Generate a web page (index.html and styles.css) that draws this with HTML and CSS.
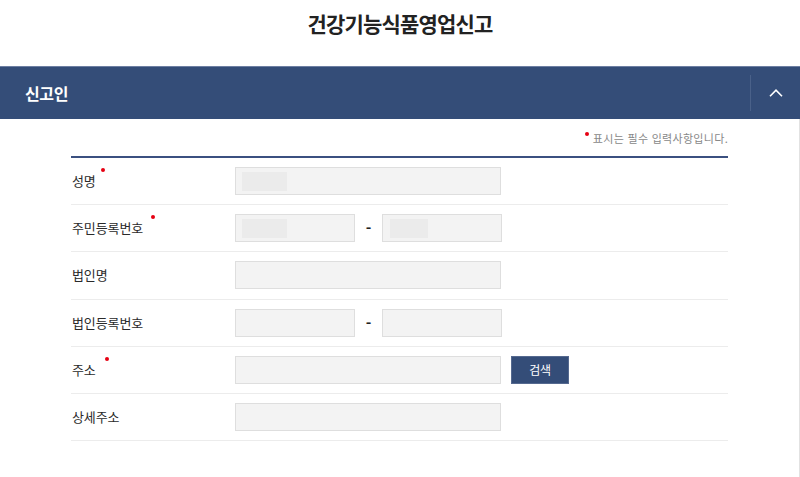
FILE: index.html
```html
<!DOCTYPE html>
<html lang="ko">
<head>
<meta charset="utf-8">
<title>건강기능식품영업신고</title>
<link rel="stylesheet" href="styles.css">
</head>
<body>
<h1 class="page-title">건강기능식품영업신고</h1>
<section class="panel">
  <div class="panel-head">
    <h2 class="panel-title">신고인</h2>
    <button class="toggle" type="button" aria-label="접기">
      <svg width="14" height="8" viewBox="0 0 14 8"><path d="M1 7.2 L7 1.2 L13 7.2" fill="none" stroke="#fff" stroke-width="1.6"/></svg>
    </button>
  </div>
  <div class="panel-body">
    <p class="note"><span class="req"></span>표시는 필수 입력사항입니다.</p>
    <div class="form">
      <div class="row">
        <div class="label">성명<span class="req req-label"></span></div>
        <div class="field"><div class="input wide"><span class="mask m1"></span></div></div>
      </div>
      <div class="row">
        <div class="label">주민등록번호<span class="req req-label"></span></div>
        <div class="field">
          <div class="input half"><span class="mask m1"></span></div>
          <span class="dash">-</span>
          <div class="input half"><span class="mask m2"></span></div>
        </div>
      </div>
      <div class="row">
        <div class="label">법인명</div>
        <div class="field"><div class="input wide"></div></div>
      </div>
      <div class="row">
        <div class="label">법인등록번호</div>
        <div class="field">
          <div class="input half"></div>
          <span class="dash">-</span>
          <div class="input half"></div>
        </div>
      </div>
      <div class="row">
        <div class="label">주소<span class="req req-label far"></span></div>
        <div class="field">
          <div class="input wide"></div>
          <button class="btn" type="button">검색</button>
        </div>
      </div>
      <div class="row">
        <div class="label">상세주소</div>
        <div class="field"><div class="input wide"></div></div>
      </div>
    </div>
  </div>
</section>
</body>
</html>
```

FILE: styles.css
```css
* { box-sizing: border-box; }
html, body { margin: 0; padding: 0; background: #fff; }
body {
  font-family: "Noto Sans CJK KR", "Noto Sans", "Liberation Sans", sans-serif;
  color: #333;
}
.page-title {
  margin: 0;
  padding: 8px 0 28px;
  height: 66px;
  text-align: center;
  font-size: 21px;
  line-height: 30px;
  font-weight: 700;
  letter-spacing: -0.8px;
  color: #222;
}
.panel-head {
  display: flex;
  align-items: center;
  height: 53px;
  background: #344d78;
  border-top: 1px solid #6d7fa2;
}
.panel-title {
  flex: 1;
  margin: 0;
  padding-left: 25px;
  font-size: 16px;
  font-weight: 700;
  letter-spacing: -0.4px;
  color: #fff;
}
.toggle {
  width: 50px;
  height: 36px;
  padding: 0;
  margin: 0;
  border: 0;
  border-left: 1px solid #4a6189;
  background: transparent;
  display: flex;
  align-items: center;
  justify-content: center;
  padding-left: 1px;
}
.panel-body {
  border-right: 1px solid #e2e2e2;
  padding: 0 71px 0 71px;
  height: 358px;
}
.note {
  margin: 0;
  padding: 11px 0 10px;
  text-align: right;
  font-size: 11px;
  line-height: 16px;
  letter-spacing: 0.3px;
  color: #888;
}
.req {
  display: inline-block;
  width: 4px;
  height: 4px;
  border-radius: 50%;
  background: #e60012;
  vertical-align: top;
  margin: 2px 4px 0 0;
}
.form { border-top: 2px solid #3b5080; }
.row {
  display: flex;
  align-items: center;
  padding: 9px 0 9.2px;
  border-bottom: 1px solid #ececec;
}
.label {
  width: 164px;
  padding-left: 1px;
  font-size: 13px;
  letter-spacing: -0.1px;
  color: #2a2a2a;
  line-height: 28px;
  position: relative;
}
.req-label {
  position: absolute;
  top: 1px;
  margin: 0;
}
.row:nth-child(1) .req-label { left: 30px; }
.row:nth-child(2) .req-label { left: 80px; }
.req-label.far { left: 34px; }
.field { display: flex; align-items: center; }
.input {
  height: 28px;
  background: #f3f3f3;
  border: 1px solid #dedede;
  display: flex;
  align-items: center;
  padding-left: 6px;
}
.input.wide { width: 266px; }
.input.half { width: 120px; }
.mask { display: block; height: 19px; background: #ebebeb; }
.m1 { width: 45px; }
.m2 { width: 38px; margin-left: 1px; }
.dash {
  width: 27px;
  text-align: center;
  font-size: 15px;
  font-weight: 700;
  color: #222;
  line-height: 28px;
}
.btn {
  margin-left: 10px;
  width: 58px;
  height: 28px;
  background: #344d78;
  border: 1px solid #55698f;
  color: #fff;
  font-family: inherit;
  font-size: 12px;
  letter-spacing: -0.3px;
  padding: 0;
}
```
